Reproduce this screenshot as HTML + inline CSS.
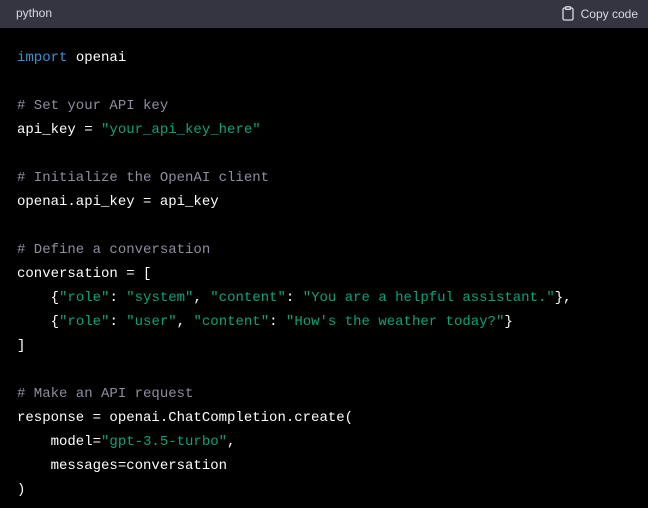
<!DOCTYPE html>
<html><head><style>
html,body{margin:0;padding:0;background:#000;width:648px;height:508px;overflow:hidden}
.hd{height:28px;background:#343541;color:#d9d9e3;font:12px "Liberation Sans",sans-serif;position:relative}
.hd .l{position:absolute;left:16px;top:6px}
.hd .r{position:absolute;right:10px;top:6px;display:flex;align-items:center;gap:7px}
pre{margin:0;padding:18px 0 0 17px;font:14px/24px "Liberation Mono",monospace;color:#fff}
.k{color:#2e95d3}.s{color:#00a67d}.c{color:#8e8ea0}
</style></head><body>
<div class="hd"><span class="l">python</span><span class="r"><svg width="12" height="15" viewBox="0 0 12 15" fill="none" stroke="#d9d9e3" stroke-width="1.3"><rect x="1" y="2" width="10" height="12" rx="1.5"/><rect x="3.5" y="0.8" width="5" height="2.5" rx="0.6" fill="#343541"/></svg>Copy code</span></div>
<pre><span class="k">import</span> openai

<span class="c"># Set your API key</span>
api_key = <span class="s">"your_api_key_here"</span>

<span class="c"># Initialize the OpenAI client</span>
openai.api_key = api_key

<span class="c"># Define a conversation</span>
conversation = [
    {<span class="s">"role"</span>: <span class="s">"system"</span>, <span class="s">"content"</span>: <span class="s">"You are a helpful assistant."</span>},
    {<span class="s">"role"</span>: <span class="s">"user"</span>, <span class="s">"content"</span>: <span class="s">"How's the weather today?"</span>}
]

<span class="c"># Make an API request</span>
response = openai.ChatCompletion.create(
    model=<span class="s">"gpt-3.5-turbo"</span>,
    messages=conversation
)</pre>
</body></html>
